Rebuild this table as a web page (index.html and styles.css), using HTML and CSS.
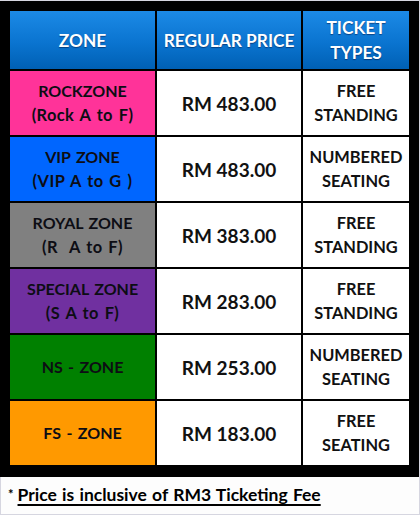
FILE: index.html
```html
<!DOCTYPE html>
<html>
<head>
<meta charset="utf-8">
<link rel="stylesheet" href="styles.css">
</head>
<body>
<div class="page">
  <div class="frame">
    <div class="grid">
      <div class="cell head">ZONE</div>
      <div class="cell head">REGULAR PRICE</div>
      <div class="cell head">TICKET<br>TYPES</div>

      <div class="cell zone pink">ROCKZONE<br><span class="sub">(Rock A to F)</span></div>
      <div class="cell price">RM 483.00</div>
      <div class="cell type">FREE<br>STANDING</div>

      <div class="cell zone blue">VIP ZONE<br><span class="sub">(VIP A to G )</span></div>
      <div class="cell price">RM 483.00</div>
      <div class="cell type">NUMBERED<br>SEATING</div>

      <div class="cell zone gray">ROYAL ZONE<br><span class="sub">(R&nbsp; A to F)</span></div>
      <div class="cell price">RM 383.00</div>
      <div class="cell type">FREE<br>STANDING</div>

      <div class="cell zone purple">SPECIAL ZONE<br><span class="sub">(S A to F)</span></div>
      <div class="cell price">RM 283.00</div>
      <div class="cell type">FREE<br>STANDING</div>

      <div class="cell zone green">NS - ZONE</div>
      <div class="cell price">RM 253.00</div>
      <div class="cell type">NUMBERED<br>SEATING</div>

      <div class="cell zone orange">FS - ZONE</div>
      <div class="cell price">RM 183.00</div>
      <div class="cell type">FREE<br>SEATING</div>
    </div>
  </div>
  <div class="note"><span class="star">*</span><span class="u">Price is inclusive of RM3 Ticketing Fee</span></div>
</div>
</body>
</html>
```
FILE: styles.css
```css
html, body {
  margin: 0;
  padding: 0;
  background: #ffffff;
}
body {
  width: 420px;
  height: 515px;
  overflow: hidden;
  font-family: Lato, "Open Sans", sans-serif;
  font-weight: 700;
}
.page {
  box-sizing: border-box;
  width: 420px;
  height: 515px;
  border: 1px solid #d6d6e0;
  background: #fdfdfd;
}
.frame {
  background: #000;
  margin-left: -1px;
  padding: 10px 10px 12px 10px;
}
.grid {
  display: grid;
  grid-template-columns: 145px 144px 106px;
  grid-template-rows: 58px repeat(6, 64px);
  gap: 2px;
  background: #000;
}
.cell {
  display: flex;
  flex-direction: column;
  align-items: center;
  justify-content: center;
  text-align: center;
  background: #fff;
  color: #111;
  white-space: nowrap;
}
.head {
  background: linear-gradient(#1c8ae6, #0a74d0 55%, #0060b4);
  color: #fff;
  font-size: 17.3px;
  line-height: 25px;
  text-shadow: 0 1px 1px rgba(0,0,40,0.45);
}
.zone {
  font-size: 16px;
  line-height: 24px;
  word-spacing: 1.5px;
  color: #0d0d14;
}
.sub {
  letter-spacing: 0.4px;
  font-size: 16.4px;
}
.type {
  font-size: 16.4px;
  line-height: 24px;
}
.price {
  font-size: 19px;
}
.pink { background: #ff3399; }
.blue { background: #0066ff; }
.gray { background: #808080; }
.purple { background: #7030a0; }
.green { background: #008000; }
.orange { background: #ff9900; }
.note {
  padding: 7px 0 0 7px;
  font-size: 17.5px;
  line-height: 20px;
  word-spacing: 1px;
  color: #000;
}
.star {
  display: inline-block;
  font-size: 13px;
  vertical-align: 2px;
  margin-right: 4px;
}
.u {
  text-decoration: underline;
  text-decoration-thickness: 2px;
  text-underline-offset: 3px;
}
```
